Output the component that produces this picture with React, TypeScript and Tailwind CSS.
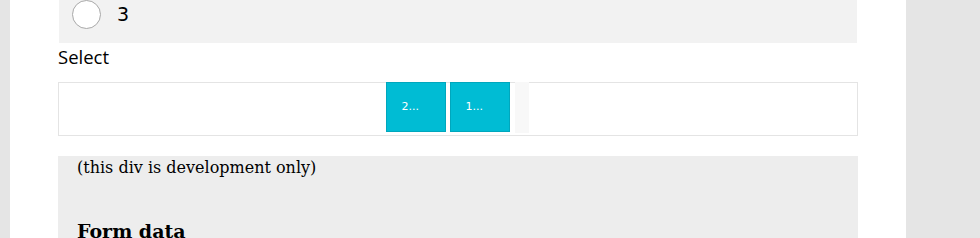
export default function App() {
  return (
    <div className="flex h-[238px] w-[980px] overflow-hidden bg-[#e5e5e5]">
      <div className="ml-[10px] w-[896px] shrink-0 bg-white">
        <div className="ml-[48px] w-[800px]">
          {/* radio option */}
          <div className="ml-px flex h-[43px] w-[798px] items-start bg-[#f2f2f2] font-['DejaVu_Sans',sans-serif]">
            <span className="ml-[13px] box-border h-[29px] w-[29px] rounded-full border border-[#a8a8a8] bg-white" />
            <span className="ml-[16px] text-[19px] leading-[28px] text-black">3</span>
          </div>

          <div className="mt-[2px] font-['Open_Sans',sans-serif] text-[18.5px] leading-[24px] text-black">Select</div>

          {/* select box */}
          <div className="mt-[13px] flex h-[54px] items-start justify-center border border-[#e4e4e4] bg-white">
            <div className="-ml-[2px] -mt-px flex gap-[4px]">
              <button className="flex h-[50px] w-[60px] items-center border border-[#00a7bd] bg-[#00bcd4] pl-[15px] font-['DejaVu_Sans',sans-serif] text-[11px] text-white">
                2...
              </button>
              <button className="flex h-[50px] w-[60px] items-center border border-[#00a7bd] bg-[#00bcd4] pl-[15px] font-['DejaVu_Sans',sans-serif] text-[11px] text-white">
                1...
              </button>
              <div className="ml-[1px] h-[51px] w-[14px] bg-[#f8f8f8]" />
            </div>
          </div>

          {/* dev div */}
          <div className="mt-[20px] h-[100px] bg-[#ededed] px-[19px] font-['DejaVu_Serif',serif] text-black">
            <div className="pt-[1px] text-[16px] leading-[22px]">(this div is development only)</div>
            <h3 className="mt-[40px] text-[19px] font-bold leading-[24px]">Form data</h3>
          </div>
        </div>
      </div>
    </div>
  );
}
